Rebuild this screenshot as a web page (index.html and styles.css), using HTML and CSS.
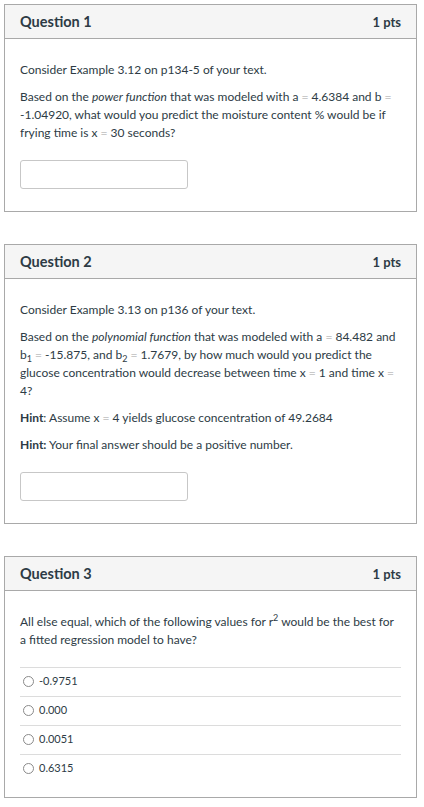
FILE: index.html
```html
<!DOCTYPE html>
<html lang="en">
<head>
<meta charset="utf-8">
<title>Quiz</title>
<link rel="stylesheet" href="styles.css">
</head>
<body>
<div class="quiz">
  <section class="card">
    <header class="card-head">
      <h2 class="title">Question 1</h2>
      <span class="pts">1 pts</span>
    </header>
    <div class="card-body">
      <p>Consider Example 3.12 on p134-5 of your text.</p>
      <p>Based on the <em>power function</em> that was modeled with a <span class="eq">=</span> 4.6384 and b <span class="eq">=</span> -1.04920, what would you predict the moisture content % would be if frying time is x <span class="eq">=</span> 30 seconds?</p>
      <div class="answer-box"></div>
    </div>
  </section>

  <section class="card">
    <header class="card-head">
      <h2 class="title">Question 2</h2>
      <span class="pts">1 pts</span>
    </header>
    <div class="card-body">
      <p>Consider Example 3.13 on p136 of your text.</p>
      <p>Based on the <em>polynomial function</em> that was modeled with a <span class="eq">=</span> 84.482 and b<sub>1</sub> <span class="eq">=</span> -15.875, and b<sub>2</sub> <span class="eq">=</span> 1.7679, by how much would you predict the glucose concentration would decrease between time x <span class="eq">=</span> 1 and time x <span class="eq">=</span> 4?</p>
      <p><strong>Hint</strong>: Assume x <span class="eq">=</span> 4 yields glucose concentration of 49.2684</p>
      <p><strong>Hint:</strong> Your final answer should be a positive number.</p>
      <div class="answer-box"></div>
    </div>
  </section>

  <section class="card">
    <header class="card-head">
      <h2 class="title">Question 3</h2>
      <span class="pts">1 pts</span>
    </header>
    <div class="card-body card-body-mc">
      <p>All else equal, which of the following values for r<sup>2</sup> would be the best for a fitted regression model to have?</p>
      <ul class="options">
        <li class="option"><span class="radio"></span><span class="label">-0.9751</span></li>
        <li class="option"><span class="radio"></span><span class="label">0.000</span></li>
        <li class="option"><span class="radio"></span><span class="label">0.0051</span></li>
        <li class="option"><span class="radio"></span><span class="label">0.6315</span></li>
      </ul>
    </div>
  </section>
</div>
</body>
</html>
```

FILE: styles.css
```css
* { box-sizing: border-box; }

html, body {
  margin: 0;
  padding: 0;
  background: #ffffff;
}

body {
  font-family: Lato, "Noto Sans", "Liberation Sans", sans-serif;
  color: #2d3b45;
}

.quiz {
  padding: 4px 0 0 4px;
  width: 417px;
  display: flex;
  flex-direction: column;
  gap: 32px;
}

.card {
  border: 1px solid #a9a9a9;
  background: #fff;
}

.card-head {
  height: 34px;
  background: #f5f5f5;
  border-bottom: 1px solid #a9a9a9;
  display: flex;
  align-items: center;
  justify-content: space-between;
  padding: 0 15px 0 15px;
}

.title {
  margin: 0;
  font-size: 14.5px;
  font-weight: 700;
  color: #2d3b45;
  line-height: 18px;
}

.pts {
  font-size: 13px;
  font-weight: 700;
  color: #2d3b45;
  line-height: 18px;
}

.card-body {
  padding: 22px 15px 22px 15px;
  font-size: 12px;
  line-height: 18px;
}

.card-body p {
  margin: 0 0 9px 0;
}

.card-body em { font-style: italic; }
.card-body strong { font-weight: 700; }

.eq {
  color: #c9c9c9;
}

sub, sup {
  font-size: 9px;
  line-height: 1;
  vertical-align: baseline;
  position: relative;
}

sub { top: 3px; }
sup { top: -5px; }

.answer-box {
  margin-top: 18px;
  width: 168px;
  height: 29px;
  border: 1px solid #c7c7c7;
  border-radius: 3px;
  background: #fff;
}

.card-body-mc {
  padding-bottom: 14px;
}

.options {
  list-style: none;
  margin: 18px 0 0 0;
  padding: 0;
}

.option {
  border-top: 1px solid #dcdcdc;
  height: 29px;
  display: flex;
  align-items: center;
  gap: 5px;
  padding: 0 0 3px 3px;
  font-size: 11px;
}

.radio {
  width: 11px;
  height: 11px;
  border: 1px solid #8a8a8a;
  border-radius: 50%;
  flex: none;
  margin-top: 1px;
}
```
